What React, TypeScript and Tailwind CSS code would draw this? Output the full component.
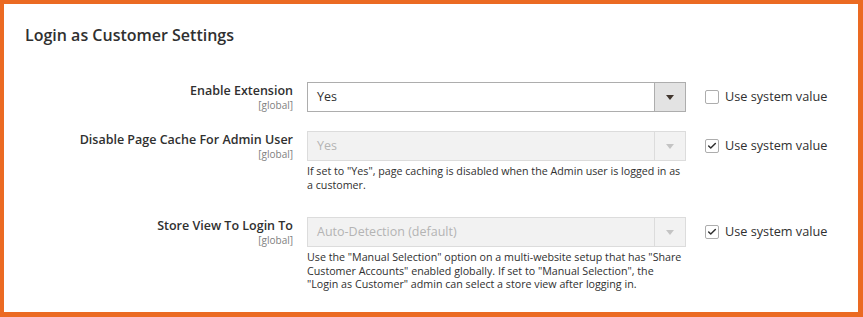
import { Check } from "lucide-react";

type Row = {
  label: string;
  value: string;
  disabled: boolean;
  checked: boolean;
  note?: string;
};

const rows: Row[] = [
  { label: "Enable Extension", value: "Yes", disabled: false, checked: false },
  {
    label: "Disable Page Cache For Admin User",
    value: "Yes",
    disabled: true,
    checked: true,
    note: 'If set to "Yes", page caching is disabled when the Admin user is logged in as a customer.',
  },
  {
    label: "Store View To Login To",
    value: "Auto-Detection (default)",
    disabled: true,
    checked: true,
    note: 'Use the "Manual Selection" option on a multi-website setup that has "Share Customer Accounts" enabled globally. If set to "Manual Selection", the "Login as Customer" admin can select a store view after logging in.',
  },
];

function SelectBox({ value, disabled }: { value: string; disabled: boolean }) {
  return (
    <div
      className={
        disabled
          ? "flex h-[30px] w-[379px] border border-[#dcdcdc] bg-[#f2f2f2]"
          : "flex h-[30px] w-[379px] border border-[#adadad] bg-white"
      }
    >
      <span
        className={
          disabled
            ? "flex-1 pl-[9px] text-[12.5px] leading-[28px] text-[#b4b4b4]"
            : "flex-1 pl-[9px] text-[12.5px] leading-[28px] text-[#303030]"
        }
      >
        {value}
      </span>
      <span
        className={
          disabled
            ? "flex w-[31px] items-center justify-center border-l border-[#dcdcdc]"
            : "flex w-[31px] items-center justify-center border-l border-[#adadad] bg-[#e3e3e3]"
        }
      >
        <svg width="8" height="5" viewBox="0 0 8 5">
          <path d="M0 0h8L4 5z" fill={disabled ? "#c4c4c4" : "#41362f"} />
        </svg>
      </span>
    </div>
  );
}

function FieldRow({ row, index }: { row: Row; index: number }) {
  const gap = index === 0 ? "flex" : index === 1 ? "mt-[19px] flex" : "mt-[25px] flex";
  return (
    <div className={gap}>
      <div className="w-[289px] pt-[1px] text-right">
        <div className="text-[12.5px] font-semibold leading-[16px] text-[#303030]">{row.label}</div>
        <div className="text-[10px] leading-[12px] text-[#808080]">[global]</div>
      </div>
      <div className="ml-[14px] w-[379px]">
        <SelectBox value={row.value} disabled={row.disabled} />
        {row.note && (
          <p className="mt-[4px] text-[10.7px] leading-[13.5px] text-[#303030]">{row.note}</p>
        )}
      </div>
      <label className="ml-[19px] flex h-[30px] items-center gap-[6px]">
        <span className="flex h-[14px] w-[14px] items-center justify-center rounded-[2px] border border-[#adadad] bg-white">
          {row.checked && <Check className="h-[10px] w-[10px] text-[#303030]" strokeWidth={3.5} />}
        </span>
        <span className="text-[12.7px] text-[#303030]">Use system value</span>
      </label>
    </div>
  );
}

export default function App() {
  return (
    <div
      className="h-[317px] w-[863px] border-t-4 border-l-4 border-r-[5px] border-b-[5px] border-[#eb6a22] bg-white"
      style={{ fontFamily: '"Open Sans", "Liberation Sans", sans-serif' }}
    >
      <h2 className="pl-[21px] pt-[21px] text-[16px] font-semibold leading-[20px] text-[#303030]">
        Login as Customer Settings
      </h2>
      <div className="mt-[37px]">
        {rows.map((row, i) => (
          <FieldRow key={row.label} row={row} index={i} />
        ))}
      </div>
    </div>
  );
}
